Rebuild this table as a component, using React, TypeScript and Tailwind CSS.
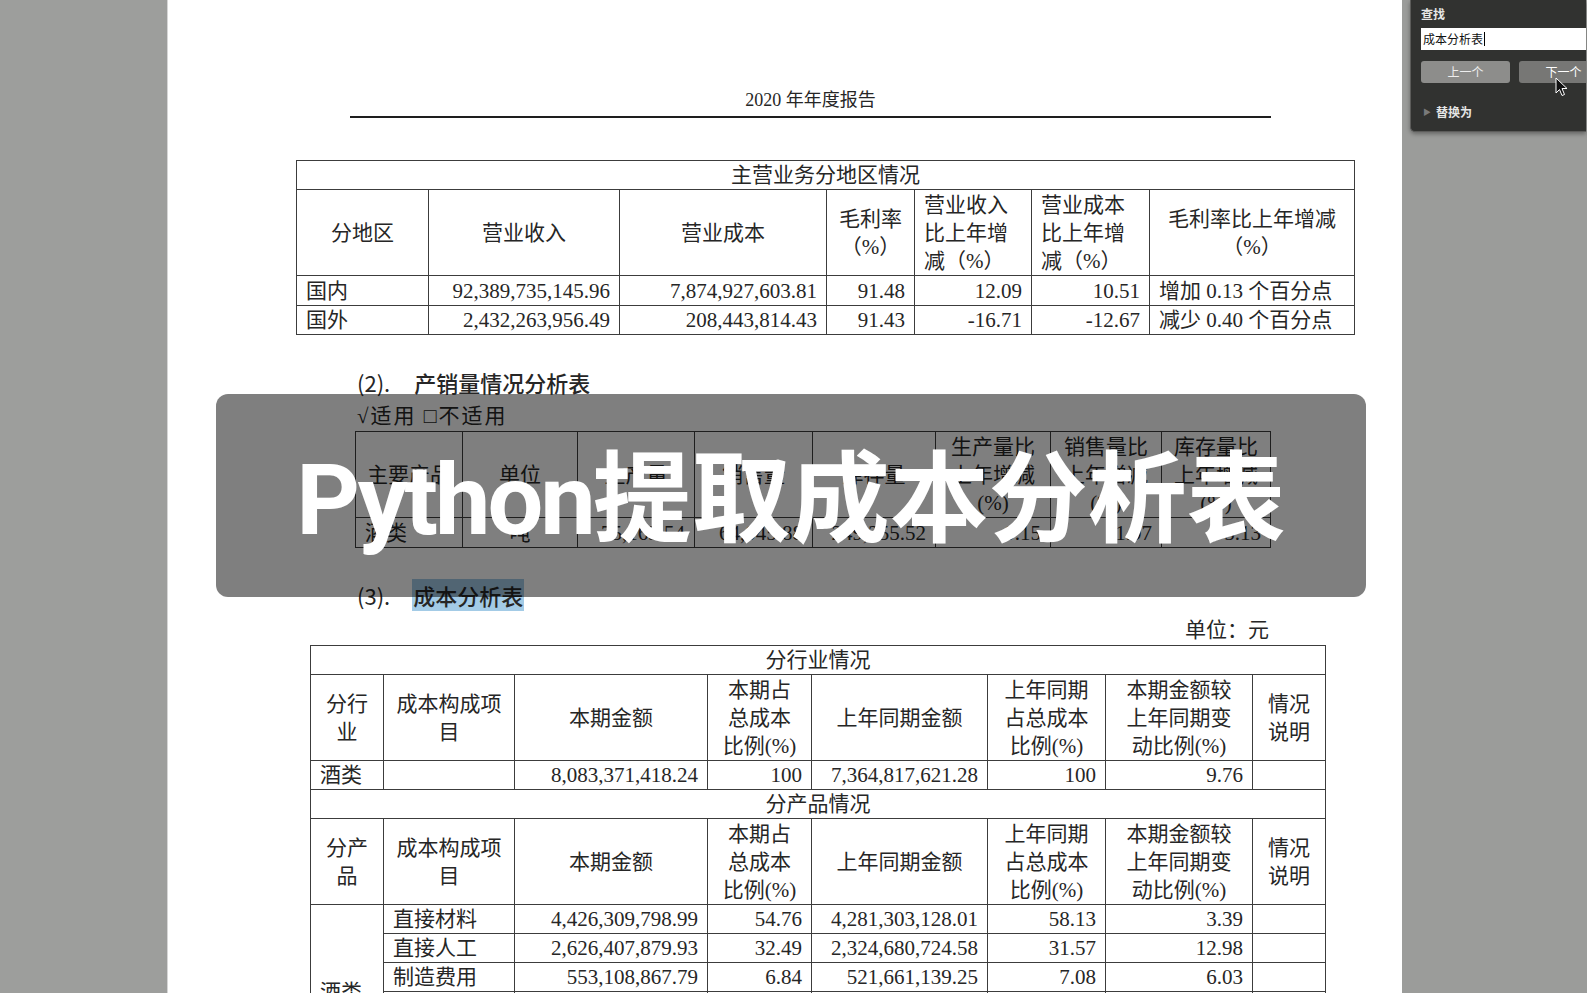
import React from "react"

const cell = "border border-[#3c3c3c] px-[9px] leading-[28px] align-middle"
const docFont = "font-['Liberation_Serif','Noto_Sans_CJK_SC',serif] text-[21px] text-[#262626]"
const headFont = "font-['Noto_Sans_CJK_SC',sans-serif] text-[22px] text-[#262626]"

function RegionTable() {
  return (
    <table className={`table-fixed border-collapse w-[1058px] ml-[128px] mt-[42px] ${docFont}`}>
      <colgroup>
        <col className="w-[132px]" />
        <col className="w-[191px]" />
        <col className="w-[207px]" />
        <col className="w-[88px]" />
        <col className="w-[117px]" />
        <col className="w-[118px]" />
        <col className="w-[205px]" />
      </colgroup>
      <tbody>
        <tr className="h-[29px]">
          <td colSpan={7} className={`${cell} text-center`}>主营业务分地区情况</td>
        </tr>
        <tr className="h-[86px]">
          <td className={`${cell} text-center`}>分地区</td>
          <td className={`${cell} text-center`}>营业收入</td>
          <td className={`${cell} text-center`}>营业成本</td>
          <td className={`${cell} text-center`}>毛利率<br />（%）</td>
          <td className={`${cell} text-left`}>营业收入<br />比上年增<br />减（%）</td>
          <td className={`${cell} text-left`}>营业成本<br />比上年增<br />减（%）</td>
          <td className={`${cell} text-center`}>毛利率比上年增减<br />（%）</td>
        </tr>
        <tr className="h-[30px]">
          <td className={cell}>国内</td>
          <td className={`${cell} text-right`}>92,389,735,145.96</td>
          <td className={`${cell} text-right`}>7,874,927,603.81</td>
          <td className={`${cell} text-right`}>91.48</td>
          <td className={`${cell} text-right`}>12.09</td>
          <td className={`${cell} text-right`}>10.51</td>
          <td className={`${cell} text-left`}>增加 0.13 个百分点</td>
        </tr>
        <tr className="h-[29px]">
          <td className={cell}>国外</td>
          <td className={`${cell} text-right`}>2,432,263,956.49</td>
          <td className={`${cell} text-right`}>208,443,814.43</td>
          <td className={`${cell} text-right`}>91.43</td>
          <td className={`${cell} text-right`}>-16.71</td>
          <td className={`${cell} text-right`}>-12.67</td>
          <td className={`${cell} text-left`}>减少 0.40 个百分点</td>
        </tr>
      </tbody>
    </table>
  )
}

function OutputTable() {
  return (
    <table className={`table-fixed border-collapse w-[915px] ml-[187px] mt-[3px] ${docFont}`}>
      <colgroup>
        <col className="w-[107px]" />
        <col className="w-[115px]" />
        <col className="w-[117px]" />
        <col className="w-[118px]" />
        <col className="w-[123px]" />
        <col className="w-[115px]" />
        <col className="w-[111px]" />
        <col className="w-[109px]" />
      </colgroup>
      <tbody>
        <tr className="h-[86px]">
          <td className={`${cell} text-center`}>主要产品</td>
          <td className={`${cell} text-center`}>单位</td>
          <td className={`${cell} text-center`}>生产量</td>
          <td className={`${cell} text-center`}>销售量</td>
          <td className={`${cell} text-center`}>库存量</td>
          <td className={`${cell} text-center`}>生产量比<br />上年增减<br />(%)</td>
          <td className={`${cell} text-center`}>销售量比<br />上年增减<br />(%)</td>
          <td className={`${cell} text-center`}>库存量比<br />上年增减<br />(%)</td>
        </tr>
        <tr className="h-[30px]">
          <td className={cell}>酒类</td>
          <td className={`${cell} text-center`}>吨</td>
          <td className={`${cell} text-right`}>75,163.54</td>
          <td className={`${cell} text-right`}>64,045.88</td>
          <td className={`${cell} text-right`}>249,255.52</td>
          <td className={`${cell} text-right`}>0.15</td>
          <td className={`${cell} text-right`}>-1.97</td>
          <td className={`${cell} text-right`}>5.13</td>
        </tr>
      </tbody>
    </table>
  )
}

const costRows = [
  ["直接材料", "4,426,309,798.99", "54.76", "4,281,303,128.01", "58.13", "3.39"],
  ["直接人工", "2,626,407,879.93", "32.49", "2,324,680,724.58", "31.57", "12.98"],
  ["制造费用", "553,108,867.79", "6.84", "521,661,139.25", "7.08", "6.03"],
  ["燃料动力", "110,245,330.12", "1.36", "98,412,260.37", "1.34", "12.02"],
  ["其他", "12,600,541.41", "0.16", "11,760,368.07", "0.16", "7.14"],
  ["合计", "7,728,671,417.24", "95.61", "7,237,817,620.28", "98.28", "6.78"],
]

function CostHeader({ first }: { first: React.ReactNode }) {
  return (
    <tr className="h-[86px]">
      <td className={`${cell} text-center`}>{first}</td>
      <td className={`${cell} text-center`}>成本构成项<br />目</td>
      <td className={`${cell} text-center`}>本期金额</td>
      <td className={`${cell} text-center`}>本期占<br />总成本<br />比例(%)</td>
      <td className={`${cell} text-center`}>上年同期金额</td>
      <td className={`${cell} text-center`}>上年同期<br />占总成本<br />比例(%)</td>
      <td className={`${cell} text-center`}>本期金额较<br />上年同期变<br />动比例(%)</td>
      <td className={`${cell} text-center`}>情况<br />说明</td>
    </tr>
  )
}

function CostTable() {
  return (
    <table className={`table-fixed border-collapse w-[1015px] ml-[142px] mt-[4px] ${docFont}`}>
      <colgroup>
        <col className="w-[73px]" />
        <col className="w-[131px]" />
        <col className="w-[193px]" />
        <col className="w-[104px]" />
        <col className="w-[176px]" />
        <col className="w-[118px]" />
        <col className="w-[147px]" />
        <col className="w-[73px]" />
      </colgroup>
      <tbody>
        <tr className="h-[29px]">
          <td colSpan={8} className={`${cell} text-center`}>分行业情况</td>
        </tr>
        <CostHeader first={<>分行<br />业</>} />
        <tr className="h-[29px]">
          <td className={cell}>酒类</td>
          <td className={cell}></td>
          <td className={`${cell} text-right`}>8,083,371,418.24</td>
          <td className={`${cell} text-right`}>100</td>
          <td className={`${cell} text-right`}>7,364,817,621.28</td>
          <td className={`${cell} text-right`}>100</td>
          <td className={`${cell} text-right`}>9.76</td>
          <td className={cell}></td>
        </tr>
        <tr className="h-[29px]">
          <td colSpan={8} className={`${cell} text-center`}>分产品情况</td>
        </tr>
        <CostHeader first={<>分产<br />品</>} />
        {costRows.map((r, i) => (
          <tr key={r[0]} className="h-[29px]">
            {i === 0 && (
              <td rowSpan={costRows.length} className={`${cell} text-left`}>酒类</td>
            )}
            <td className={cell}>{r[0]}</td>
            <td className={`${cell} text-right`}>{r[1]}</td>
            <td className={`${cell} text-right`}>{r[2]}</td>
            <td className={`${cell} text-right`}>{r[3]}</td>
            <td className={`${cell} text-right`}>{r[4]}</td>
            <td className={`${cell} text-right`}>{r[5]}</td>
            <td className={cell}></td>
          </tr>
        ))}
      </tbody>
    </table>
  )
}

function FindPanel() {
  return (
    <div className="relative w-[184px] h-full bg-[#9b9c9a]">
      <div className="ml-[8px] h-[132px] bg-[#313230] border-l border-b border-[#5c5c5a] rounded-bl-[5px] shadow-[0_2px_4px_rgba(0,0,0,0.35)] pl-[10px] pt-[6px] font-['Noto_Sans_CJK_SC',sans-serif] text-[12px] overflow-hidden">
        <div className="leading-[16px] font-bold text-[#e6e6e6]">查找</div>
        <div className="mt-[6px] h-[22px] w-[180px] bg-white flex items-center pl-[2px] text-[#111]">
          <span className="leading-[22px]">成本分析表</span>
          <span className="w-px h-[14px] bg-black ml-px" />
        </div>
        <div className="mt-[11px] flex gap-[9px]">
          <div className="w-[89px] h-[22px] shrink-0 rounded-[3px] bg-[#8d8d8b] text-[#eeeeee] flex items-center justify-center">上一个</div>
          <div className="w-[89px] h-[22px] shrink-0 rounded-[3px] bg-[#777775] text-white flex items-center justify-center">下一个</div>
        </div>
        <div className="mt-[20px] flex items-center leading-[18px]">
          <span className="text-[8px] text-[#7a7a7a] ml-[2px]">▶</span>
          <span className="ml-[5px] font-bold text-[#e6e6e6]">替换为</span>
        </div>
      </div>
      <svg className="absolute left-[153px] top-[77px]" width="14" height="21" viewBox="0 0 14 21">
        <path d="M1 1 L1 16 L4.5 12.5 L7 18.5 L9.5 17.5 L7 11.5 L12 11.5 Z" fill="#111" stroke="#fff" strokeWidth="1" />
      </svg>
    </div>
  )
}

export default function App() {
  return (
    <div className="w-[1587px] h-[993px] overflow-hidden flex bg-[#9b9c9a]">
      <div className="w-[168px] shrink-0 h-full bg-[#9d9e9c] border-r border-[#d6d6d6]" />
      <div className="relative w-[1234px] shrink-0 h-full bg-white overflow-hidden">
        <div className="ml-[182px] w-[921px] pt-[89px]">
          <div className={`text-center leading-[22px] ${docFont} !text-[18px]`}>2020 年年度报告</div>
          <div className="mt-[5px] h-[2px] bg-[#1e1e1e]" />
        </div>

        <RegionTable />

        <div className={`ml-[189px] mt-[35px] leading-[24px] ${headFont}`}>
          <span>(2).</span>
          <span className="ml-[24px] font-medium">产销量情况分析表</span>
        </div>
        <div className={`ml-[189px] mt-[10px] leading-[24px] tracking-[2px] ${docFont}`}>√适用 □不适用</div>

        <OutputTable />

        <div className={`ml-[189px] mt-[35px] leading-[24px] ${headFont}`}>
          <span>(3).</span>
          <span className="ml-[22px] font-medium bg-[#a3cbe6] px-[1px]">成本分析表</span>
        </div>
        <div className={`w-[1101px] mt-[12px] leading-[22px] text-right ${docFont}`}>单位：元</div>

        <CostTable />

        <div className="absolute left-[48px] top-[394px] w-[1150px] h-[203px] rounded-[12px] bg-black/50 flex items-center justify-center">
          <span className="font-bold text-white text-[99px] leading-none">
            <span className="font-['Roboto',sans-serif] tracking-[-3px]">Python</span>
            <span className="font-['Noto_Sans_CJK_SC',sans-serif]">提取成本分析表</span>
          </span>
        </div>
      </div>
      <FindPanel />
    </div>
  )
}
